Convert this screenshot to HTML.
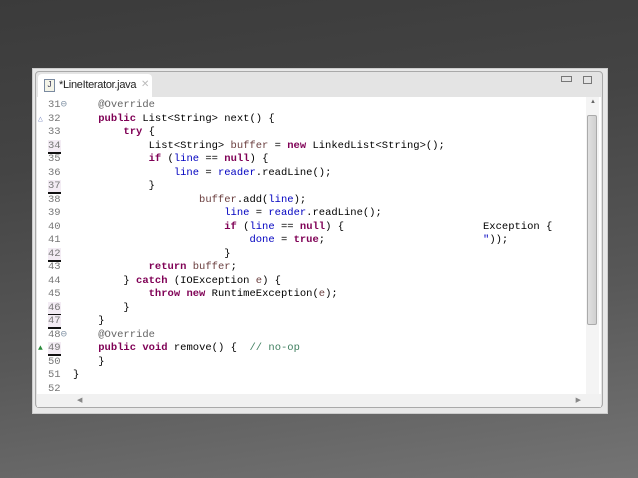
<!DOCTYPE html>
<html style="background:#444"><head><style>
html,body{margin:0;width:638px;height:478px;overflow:hidden}
body{background:linear-gradient(172deg,#3b3b3b 0%,#444 30%,#585858 65%,#747474 100%);position:relative;font-family:"Liberation Sans",sans-serif}
.frame{position:absolute;left:32px;top:68px;width:576px;height:346px;background:#e8e8e8;border:1px solid #ccc;box-sizing:border-box}
.win{position:absolute;left:2px;top:2px;right:4px;bottom:5px;background:#e4e4e4;border:1px solid #a9a9a9;border-radius:4px}
.tab{position:absolute;left:2px;top:2px;width:114px;height:23px;background:#fff;border-radius:4px 4px 0 0;font-size:11px;color:#222;line-height:22px}
.tab .ic{position:absolute;left:6px;top:5px;width:9px;height:11px;border:1px solid #7a8aa0;background:#f4f4e8;font-size:8px;line-height:10px;text-align:center;color:#335}
.tab .t{position:absolute;left:21px;letter-spacing:-0.3px}
.tab .x{position:absolute;left:103px;color:#bbb;font-size:10px}
.editor{position:absolute;left:1px;top:25px;right:1px;bottom:13px;background:#fff;overflow:hidden}
.code{position:absolute;left:0;top:2px;font-family:"Liberation Mono",monospace;font-size:10.5px;line-height:13.5px;color:#000}
.code>div{position:relative;height:13.5px}
.ln{position:absolute;left:11px;width:20px;color:#777;white-space:pre}
.c{position:absolute;left:36px;white-space:pre}
.r{position:absolute;left:446px;white-space:pre}
.k{color:#7f0055;font-weight:bold}.f{color:#0000c0}.a{color:#646464}.g{color:#3f7f5f}.v{color:#6a3e3e}
.u{border-bottom:2px solid #111;background:#f3ecf4}
.vs{position:absolute;right:2px;top:0;width:13px;bottom:0;background:#f4f4f4}
.thumb{position:absolute;left:1px;top:18px;width:10px;height:210px;background:linear-gradient(90deg,#e0e0e0,#d0d0d0);border:1px solid #aaa;box-sizing:border-box;border-radius:2px}
.hs{position:absolute;left:1px;right:1px;bottom:0;height:13px;background:#f1f1f1;font-size:7px;color:#888}
</style></head><body>
<div class="frame"><div class="win">
<div class="tab"><div class="ic">J</div><span class="t">*LineIterator.java</span><span class="x">✕</span></div>
<div style="position:absolute;right:30px;top:4px;width:9px;height:4px;border:1px solid #777"></div>
<div style="position:absolute;right:10px;top:4px;width:7px;height:6px;border:1px solid #777"></div>
<div class="editor">
<div class="code"><div><span class="ln">31<span style="color:#89a">⊖</span></span><span class="c">    <span class="a">@Override</span></span></div><div><span style="position:absolute;left:1px;color:#7a8ac0;font-size:8px">△</span><span class="ln">32</span><span class="c">    <span class="k">public</span> List&lt;String&gt; next() {</span></div><div><span class="ln">33</span><span class="c">        <span class="k">try</span> {</span></div><div><span class="ln"><span class="u">34</span></span><span class="c">            List&lt;String&gt; <span class="v">buffer</span> = <span class="k">new</span> LinkedList&lt;String&gt;();</span></div><div><span class="ln">35</span><span class="c">            <span class="k">if</span> (<span class="f">line</span> == <span class="k">null</span>) {</span></div><div><span class="ln">36</span><span class="c">                <span class="f">line</span> = <span class="f">reader</span>.readLine();</span></div><div><span class="ln"><span class="u">37</span></span><span class="c">            }</span></div><div><span class="ln">38</span><span class="c">                    <span class="v">buffer</span>.add(<span class="f">line</span>);</span></div><div><span class="ln">39</span><span class="c">                        <span class="f">line</span> = <span class="f">reader</span>.readLine();</span></div><div><span class="ln">40</span><span class="c">                        <span class="k">if</span> (<span class="f">line</span> == <span class="k">null</span>) {</span><span class="r">Exception {</span></div><div><span class="ln">41</span><span class="c">                            <span class="f">done</span> = <span class="k">true</span>;</span><span class="r"><span class="f">"</span>));</span></div><div><span class="ln"><span class="u">42</span></span><span class="c">                        }</span></div><div><span class="ln">43</span><span class="c">            <span class="k">return</span> <span class="v">buffer</span>;</span></div><div><span class="ln">44</span><span class="c">        } <span class="k">catch</span> (IOException <span class="v">e</span>) {</span></div><div><span class="ln">45</span><span class="c">            <span class="k">throw</span> <span class="k">new</span> RuntimeException(<span class="v">e</span>);</span></div><div><span class="ln"><span class="u">46</span></span><span class="c">        }</span></div><div><span class="ln"><span class="u">47</span></span><span class="c">    }</span></div><div><span class="ln">48<span style="color:#89a">⊖</span></span><span class="c">    <span class="a">@Override</span></span></div><div><span style="position:absolute;left:1px;color:#2a8a3a;font-size:8px">▲</span><span class="ln"><span class="u">49</span></span><span class="c">    <span class="k">public</span> <span class="k">void</span> remove() {  <span class="g">// no-op</span></span></div><div><span class="ln">50</span><span class="c">    }</span></div><div><span class="ln">51</span><span class="c">}</span></div><div><span class="ln">52</span></div></div>
<div class="vs"><span style="position:absolute;left:4px;top:2px;font-size:6px;color:#666">▲</span><div class="thumb"></div></div>
</div>
<div class="hs"><span style="position:absolute;left:40px;top:2px">◀</span><span style="position:absolute;right:20px;top:2px">▶</span></div>
</div></div>
</body></html>
